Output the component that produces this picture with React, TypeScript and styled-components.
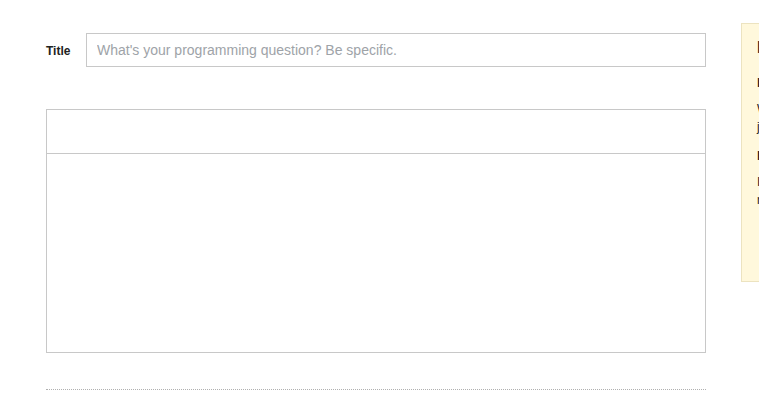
import React from "react";
import styled, { createGlobalStyle } from "styled-components";

const Global = createGlobalStyle`
  html, body { margin: 0; padding: 0; background: #fff; overflow: hidden; }
  body { font-family: "Liberation Sans", Arial, sans-serif; color: #222; }
  * { box-sizing: border-box; }
`;

const Page = styled.div`
  display: flex;
  align-items: flex-start;
  gap: 35px;
  padding: 23px 0 0 46px;
  width: 1100px;
`;

const Main = styled.div`
  width: 660px;
  flex: none;
  margin-top: 10px;
  display: flex;
  flex-direction: column;
`;

const TitleRow = styled.div`
  display: flex;
  align-items: center;
`;

const Label = styled.label`
  width: 40px;
  font-size: 12px;
  font-weight: bold;
  color: #222;
  padding-top: 2px;
`;

const TitleInput = styled.input`
  flex: 1;
  height: 34px;
  border: 1px solid #c8c8c8;
  padding: 0 10px;
  font-family: "Liberation Sans", Arial, sans-serif;
  font-size: 14px;
  color: #222;
  outline: none;
  &::placeholder { color: #9ea3a8; }
`;

const Editor = styled.div`
  margin-top: 42px;
  border: 1px solid #c8c8c8;
  display: flex;
  flex-direction: column;
`;

const Toolbar = styled.div`
  height: 44px;
  border-bottom: 1px solid #c8c8c8;
`;

const TextArea = styled.div`
  height: 198px;
`;

const Divider = styled.div`
  margin-top: 36px;
  border-top: 1px dotted #b0b0b0;
`;

const Side = styled.aside`
  width: 300px;
  flex: none;
  height: 259px;
  background: #fff8dc;
  border: 1px solid #ece3c0;
  padding: 14px 15px;
  color: #222;
`;

const SideHead = styled.h3`
  margin: 0 0 16px;
  font-size: 16px;
  font-weight: bold;
  line-height: 20px;
`;

const SideBold = styled.p`
  margin: 0 0 9px;
  font-size: 13px;
  font-weight: bold;
  line-height: 17px;
`;

const SideText = styled.p`
  margin: 0 0 11px;
  font-size: 12px;
  line-height: 18px;
`;

export default function App() {
  return (
    <>
      <Global />
      <Page>
        <Main>
          <TitleRow>
            <Label htmlFor="title">Title</Label>
            <TitleInput id="title" placeholder="What's your programming question? Be specific." />
          </TitleRow>
          <Editor>
            <Toolbar />
            <TextArea />
          </Editor>
          <Divider />
        </Main>
        <Side>
          <SideHead>How to Ask</SideHead>
          <SideBold>Is your question about programming?</SideBold>
          <SideText>We prefer questions that can be answered, not just discussed.</SideText>
          <SideBold>Provide details. Share your research.</SideBold>
          <SideText>If your question is about this website, ask it on meta instead.</SideText>
        </Side>
      </Page>
    </>
  );
}
